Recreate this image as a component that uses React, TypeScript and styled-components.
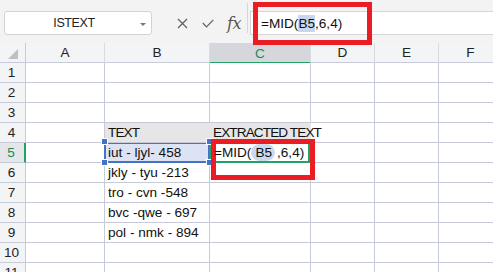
import React from 'react';
import styled, { createGlobalStyle, css } from 'styled-components';

const GRID = '#c7cad8';
const HEAD_BG = '#f3f4f6';
const GREEN = '#21a366';
const RED = '#ec1c24';
const BLUE = '#4472c4';

const GlobalStyle = createGlobalStyle`
  html, body {
    margin: 0;
    padding: 0;
    background: #ffffff;
  }
  body {
    font-family: 'Liberation Sans', Arial, sans-serif;
    color: #1a1a1a;
  }
`;

const columns = ['A', 'B', 'C', 'D', 'E', 'F'];
const colWidths = [26, 79, 105, 101, 64, 64, 64];

interface Row {
  b?: string,
  c?: string,
}
const rows: Row[] = [
  {}, {}, {},
  { b: 'TEXT', c: 'EXTRACTED TEXT' },
  { b: 'iut - ljyl- 458' },
  { b: 'jkly - tyu -213' },
  { b: 'tro - cvn -548' },
  { b: 'bvc -qwe - 697' },
  { b: 'pol - nmk - 894' },
  {}, {},
];

const App: React.FC = () => (
  <Screen>
    <GlobalStyle />
    <Toolbar>
      <NameBox>
        <NameText>ISTEXT</NameText>
        <DropArrow />
      </NameBox>
      <IconGroup>
        <IconSlot>
          <svg width="11" height="11" viewBox="0 0 11 11">
            <path d="M1 1 L10 10 M10 1 L1 10" stroke="#5f5f5f" strokeWidth="1.2" fill="none" />
          </svg>
        </IconSlot>
        <IconSlot>
          <svg width="12" height="9" viewBox="0 0 12 9">
            <path d="M0.8 4 L4.5 7.8 L11.3 0.8" stroke="#5f5f5f" strokeWidth="1.2" fill="none" />
          </svg>
        </IconSlot>
        <IconSlot>
          <Fx>fx</Fx>
        </IconSlot>
      </IconGroup>
      <Divider />
      <FormulaBar>
        <FormulaText>
          =MID(<RefMark>B5</RefMark>,6,4)
        </FormulaText>
        <Callout $top={-10} $left={2} $width={119} $height={43} />
      </FormulaBar>
    </Toolbar>

    <Sheet>
      <Corner>
        <svg width="10" height="10" viewBox="0 0 10 10">
          <path d="M10 0 L10 10 L0 10 Z" fill="#bfbfbf" />
        </svg>
      </Corner>
      {columns.map((c) => (
        <ColHeader key={c} $active={c === 'C'}>{c}</ColHeader>
      ))}

      {rows.map((r, i) => {
        const n = i + 1;
        const header = n === 4;
        return (
          <React.Fragment key={n}>
            <RowHeader $active={n === 5}>{n}</RowHeader>
            <Cell />
            <Cell $fill={header ? '#e6e6e6' : n === 5 ? '#dce3f4' : undefined} $tight={header}>
              {r.b}
              {n === 5 && (
                <>
                  <SelectionFrame />
                  <Handle $v="top" $h="left" />
                  <Handle $v="top" $h="right" />
                  <Handle $v="bottom" $h="left" />
                  <Handle $v="bottom" $h="right" />
                </>
              )}
            </Cell>
            <Cell $fill={header ? '#e6e6e6' : undefined} $tight={header}>
              {r.c}
              {n === 5 && (
                <>
                  <ActiveFrame />
                  <EditText>
                    =MID(<RefPill>B5</RefPill>,6,4)
                  </EditText>
                  <Callout $top={-4} $left={1} $width={104} $height={41} />
                </>
              )}
            </Cell>
            <Cell />
            <Cell />
            <Cell />
          </React.Fragment>
        );
      })}
    </Sheet>
  </Screen>
);
export default App;


const Screen = styled.div`
  position: relative;
  width: 493px;
  height: 272px;
  overflow: hidden;
  background: #ffffff;
`;
const Toolbar = styled.div`
  position: relative;
  z-index: 3;
  display: flex;
  align-items: flex-start;
  height: 43px;
  box-sizing: border-box;
  padding: 11px 0 0 4px;
  background: #f3f3f3;
`;
const NameBox = styled.div`
  position: relative;
  display: flex;
  align-items: center;
  justify-content: center;
  width: 148px;
  height: 24px;
  box-sizing: border-box;
  border: 1px solid #d3d3d3;
  border-radius: 3px;
  background: #ffffff;
`;
const NameText = styled.span`
  font-size: 12.5px;
  letter-spacing: -0.4px;
  color: #222;
  margin-left: -8px;
`;
const DropArrow = styled.span`
  position: absolute;
  right: 5px;
  top: 11px;
  width: 0;
  height: 0;
  border-left: 3px solid transparent;
  border-right: 3px solid transparent;
  border-top: 3px solid #7a7a7a;
`;
const IconGroup = styled.div`
  display: flex;
  gap: 6px;
  margin-left: 20px;
  height: 24px;
`;
const IconSlot = styled.div`
  width: 20px;
  height: 24px;
  display: flex;
  align-items: center;
  justify-content: center;
`;
const Fx = styled.span`
  font-family: 'DejaVu Serif', 'Liberation Serif', serif;
  font-style: italic;
  font-size: 16px;
  color: #555;
  letter-spacing: -0.5px;
`;
const Divider = styled.div`
  width: 1px;
  height: 30px;
  margin: -8px 2px 0 3px;
  background: #d6d6d6;
`;
const FormulaBar = styled.div`
  position: relative;
  flex: 1;
  height: 24px;
  box-sizing: border-box;
  border: 1px solid #d6d6d6;
  border-right: none;
  background: #ffffff;
  display: flex;
  align-items: center;
  padding-left: 10px;
`;
const FormulaText = styled.span`
  font-size: 13.6px;
  color: #111;
`;
const RefMark = styled.span`
  background: #c7d7ef;
  padding: 1px 0;
`;
const Callout = styled.div<{ $top: number, $left: number, $width: number, $height: number }>`
  position: absolute;
  z-index: 5;
  top: ${(p) => p.$top}px;
  left: ${(p) => p.$left}px;
  width: ${(p) => p.$width}px;
  height: ${(p) => p.$height}px;
  box-sizing: border-box;
  border: 5px solid ${RED};
  pointer-events: none;
`;

const Sheet = styled.div`
  display: grid;
  grid-template-columns: ${colWidths.map((w) => `${w}px`).join(' ')};
  grid-auto-rows: 20px;
  font-size: 13.6px;
`;
const baseCell = css`
  box-sizing: border-box;
  display: flex;
  align-items: center;
  white-space: nowrap;
`;
const Corner = styled.div`
  ${baseCell};
  justify-content: center;
  padding: 2px 0 0 0;
  background: ${HEAD_BG};
  border-right: 1px solid ${GRID};
  border-bottom: 1px solid ${GRID};
`;
const ColHeader = styled.div<{ $active?: boolean }>`
  ${baseCell};
  justify-content: center;
  color: ${(p) => (p.$active ? '#1b8a55' : '#222')};
  background: ${(p) => (p.$active ? '#d5d7dc' : HEAD_BG)};
  border-right: 1px solid #d9dbe2;
  border-bottom: ${(p) => (p.$active ? `2px solid ${GREEN}` : `1px solid ${GRID}`)};
  ${(p) => p.$active && css`
    height: 21px;
    padding-top: 1px;
  `}
`;
const RowHeader = styled.div<{ $active?: boolean }>`
  ${baseCell};
  justify-content: center;
  padding-right: 2px;
  color: ${(p) => (p.$active ? '#1b8a55' : '#222')};
  background: ${(p) => (p.$active ? '#e4e6ea' : HEAD_BG)};
  border-bottom: 1px solid ${GRID};
  border-right: ${(p) => (p.$active ? `2px solid ${GREEN}` : `1px solid ${GRID}`)};
`;
const Cell = styled.div<{ $fill?: string, $tight?: boolean }>`
  ${baseCell};
  position: relative;
  padding-left: 3px;
  color: #111;
  overflow: visible;
  background: ${(p) => p.$fill || '#ffffff'};
  border-right: 1px solid ${(p) => p.$fill || GRID};
  border-bottom: 1px solid ${GRID};
  letter-spacing: ${(p) => (p.$tight ? '-0.9px' : '0')};
  z-index: ${(p) => (p.$tight ? 1 : 'auto')};
`;
const SelectionFrame = styled.div`
  position: absolute;
  top: -1px;
  left: -1px;
  right: -1px;
  bottom: -1px;
  border: 2px solid ${BLUE};
  pointer-events: none;
`;
const Handle = styled.div<{ $v: 'top' | 'bottom', $h: 'left' | 'right' }>`
  position: absolute;
  z-index: 2;
  width: 5px;
  height: 5px;
  background: ${BLUE};
  box-shadow: 0 0 0 1px #ffffff;
  ${(p) => (p.$v === 'top' ? 'top: -4px;' : 'bottom: -3px;')}
  ${(p) => (p.$h === 'left' ? 'left: -3px;' : 'right: -3px;')}
`;
const ActiveFrame = styled.div`
  position: absolute;
  top: -1px;
  left: -1px;
  right: 0;
  bottom: -1px;
  border: 2px solid ${GREEN};
  pointer-events: none;
`;
const EditText = styled.span`
  position: relative;
  z-index: 6;
  display: flex;
  align-items: center;
  margin-left: 1px;
  color: #111;
`;
const RefPill = styled.span`
  display: inline-flex;
  align-items: center;
  height: 17px;
  padding: 0 3px 0 4px;
  margin-right: 2px;
  border-radius: 9px;
  background: #cbd9f0;
`;
